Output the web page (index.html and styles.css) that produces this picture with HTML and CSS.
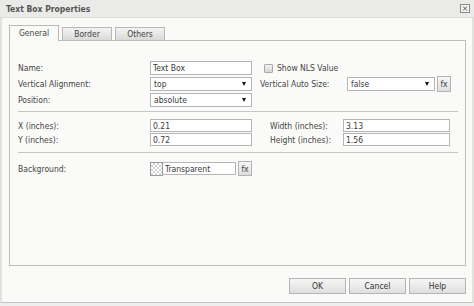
FILE: index.html
```html
<!DOCTYPE html>
<html lang="en">
<head>
    <meta charset="UTF-8">
    <title>Text Box Properties</title>
    <link rel="stylesheet" href="styles.css">
</head>
<body>
    <div class="dialog">
        <div class="titlebar">
            <span class="title">Text Box Properties</span>
            <svg class="close-icon" width="10" height="9" viewBox="0 0 10 9">
                <rect x="0.5" y="0.5" width="9" height="8" fill="#f4f4f4" stroke="#8a8a8a"/>
                <path d="M3 2.5 L7 6.5 M7 2.5 L3 6.5" stroke="#555" stroke-width="1"/>
            </svg>
        </div>

        <div class="content">
            <div class="tabs">
                <div class="tab active">General</div>
                <div class="tab">Border</div>
                <div class="tab">Others</div>
            </div>

            <div class="panel">
                <div class="grid grid-general">
                    <label>Name:</label>
                    <input class="field" type="text" value="Text Box">
                    <div class="check-cell">
                        <span class="checkbox"></span>
                        <span>Show NLS Value</span>
                    </div>

                    <label>Vertical Alignment:</label>
                    <div class="select"><span>top</span><i class="arrow"></i></div>
                    <label>Vertical Auto Size:</label>
                    <div class="select select-short"><span>false</span><i class="arrow"></i></div>
                    <button class="fx">fx</button>

                    <label>Position:</label>
                    <div class="select"><span>absolute</span><i class="arrow"></i></div>
                </div>

                <div class="separator"></div>

                <div class="grid grid-size">
                    <label>X (inches):</label>
                    <input class="field" type="text" value="0.21">
                    <label>Width (inches):</label>
                    <input class="field field-wide" type="text" value="3.13">

                    <label>Y (inches):</label>
                    <input class="field" type="text" value="0.72">
                    <label>Height (inches):</label>
                    <input class="field field-wide" type="text" value="1.56">
                </div>

                <div class="separator sep-bottom"></div>

                <div class="grid grid-bg">
                    <label>Background:</label>
                    <div class="color-picker">
                        <span class="swatch"></span>
                        <input class="field field-color" type="text" value="Transparent">
                        <button class="fx">fx</button>
                    </div>
                </div>
            </div>

            <div class="footer">
                <button class="btn">OK</button>
                <button class="btn">Cancel</button>
                <button class="btn">Help</button>
            </div>
        </div>
    </div>
</body>
</html>
```

FILE: styles.css
```css
body {
    margin: 0;
    background-color: #eeeeee;
    font-family: "DejaVu Sans Condensed", "Liberation Sans", sans-serif;
    font-size: 8.5px;
    color: #444;
}
.dialog {
    width: 474px;
    height: 303px;
    box-sizing: border-box;
    background-color: #fafbf9;
    border-left: 2px solid #e2e3e1;
    border-right: 2px solid #e2e3e1;
    border-bottom: 1px solid #c4c4c4;
}
.titlebar {
    height: 17px;
    margin: 0 -2px;
    padding: 0 6px;
    display: flex;
    align-items: center;
    justify-content: space-between;
    background-color: #eaebe9;
    border-bottom: 1px solid #dcdddb;
}
.title {
    font-weight: bold;
    color: #555;
}
.close-icon {
    display: block;
    margin-right: -2px;
}
.content {
    padding: 7px 6px 0 7px;
}
.tabs {
    display: flex;
    align-items: flex-end;
    gap: 3px;
    height: 15px;
}
.tab {
    width: 48px;
    height: 12px;
    border: 1px solid #b9b9b9;
    border-bottom: none;
    background: linear-gradient(#f4f4f4, #d9d9d9);
    text-align: center;
    line-height: 12px;
    color: #444;
}
.tab.active {
    height: 15px;
    line-height: 15px;
    background: #fafbf9;
    position: relative;
    z-index: 1;
    margin-bottom: -1px;
}
.panel {
    height: 226px;
    box-sizing: border-box;
    border: 1px solid #bdbdbd;
    padding: 20px 7px 0 8px;
}
.grid {
    display: grid;
    align-items: center;
}
.grid-general {
    grid-template-columns: 132px 110px 87px 88px 15px;
    grid-template-rows: 14px 16px 14px;
    row-gap: 1px;
}
.grid-size {
    grid-template-columns: 132px 120px 73px 107px;
    grid-template-rows: 13px 13px;
    row-gap: 1px;
}
.grid-bg {
    grid-template-columns: 132px auto;
    grid-template-rows: 15px;
}
label {
    white-space: nowrap;
}
.field {
    width: 102px;
    height: 14px;
    box-sizing: border-box;
    margin: 0;
    padding: 0 2px;
    border: 1px solid #b5b5b5;
    background: #fff;
    font: inherit;
    color: #3a3a3a;
    outline: none;
}
.grid-size .field {
    height: 13px;
}
.field-wide {
    width: 107px;
}
.check-cell {
    grid-column: 3 / -1;
    display: flex;
    align-items: center;
    gap: 4px;
    padding-left: 4px;
}
.checkbox {
    width: 7px;
    height: 7px;
    border: 1px solid #a9a9a9;
    border-radius: 1px;
    background: linear-gradient(#f2f2f2, #d6d6d6);
}
.select {
    width: 102px;
    height: 14px;
    box-sizing: border-box;
    border: 1px solid #b5b5b5;
    background: #fff;
    display: flex;
    align-items: center;
    justify-content: space-between;
    padding: 0 5px 0 3px;
    color: #3a3a3a;
}
.select-short {
    width: 88px;
}
.arrow {
    width: 0;
    height: 0;
    border-left: 2.5px solid transparent;
    border-right: 2.5px solid transparent;
    border-top: 4px solid #111;
}
.fx {
    width: 14px;
    height: 16px;
    box-sizing: border-box;
    margin: 0 0 0 2px;
    padding: 0;
    border: 1px solid #b3b3b3;
    background: linear-gradient(#f6f6f6, #dedede);
    font: inherit;
    color: #444;
}
.separator {
    height: 1px;
    background-color: #c6c6c6;
    margin: 4px 0 7px;
}
.sep-bottom {
    margin: 6px 0 8px;
}
.color-picker {
    display: flex;
    align-items: center;
}
.swatch {
    width: 13px;
    height: 14px;
    box-sizing: border-box;
    border: 1px solid #9a9a9a;
    background-color: #fff;
    background-image: conic-gradient(#d4d4d4 25%, #fff 25% 50%, #d4d4d4 50% 75%, #fff 75%);
    background-size: 4px 4px;
}
.field-color {
    width: 73px;
    height: 13px;
    border-left: none;
}
.color-picker .fx {
    margin-left: 2px;
    height: 15px;
}
.footer {
    display: flex;
    justify-content: flex-end;
    gap: 3px;
    margin-top: 12px;
}
.btn {
    width: 57px;
    height: 16px;
    margin: 0;
    padding: 0;
    border: 1px solid #b4b4b4;
    background: linear-gradient(#f6f6f6, #dfdfdf);
    font: inherit;
    color: #333;
}
```
